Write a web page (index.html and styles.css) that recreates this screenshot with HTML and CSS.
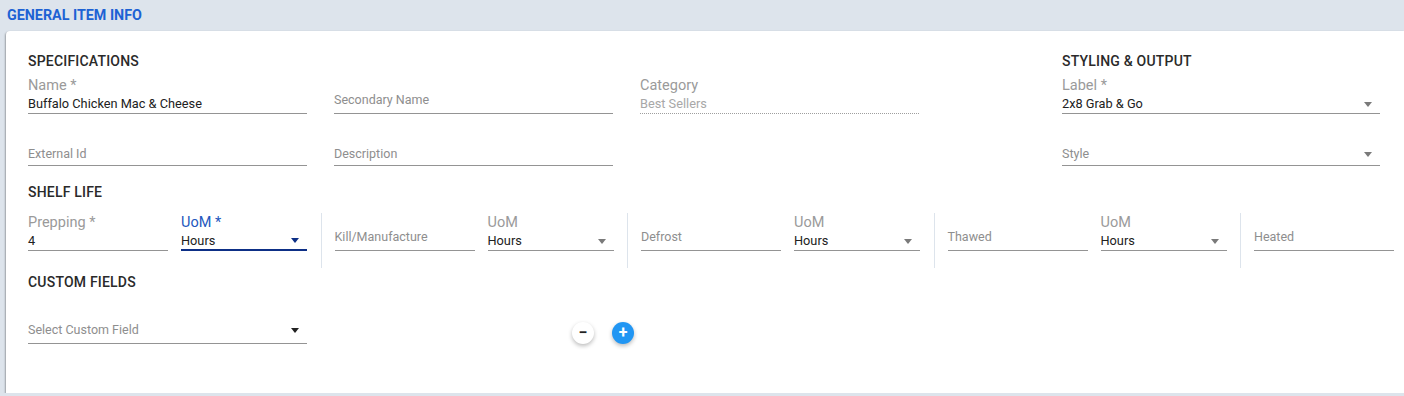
FILE: index.html
```html
<!DOCTYPE html>
<html lang="en">
<head>
    <meta charset="UTF-8">
    <meta name="viewport" content="width=device-width, initial-scale=1.0">
    <title>General Item Info</title>
    <link rel="stylesheet" href="styles.css">
</head>
<body>
    <div class="panel-header">GENERAL ITEM INFO</div>
    <div class="card">
        <div class="top">
            <div class="specs">
                <h3 class="heading">SPECIFICATIONS</h3>
                <div class="grid">
                    <div class="field">
                        <div class="label">Name *</div>
                        <div class="value">Buffalo Chicken Mac &amp; Cheese</div>
                    </div>
                    <div class="field">
                        <div class="placeholder">Secondary Name</div>
                    </div>
                    <div class="field readonly">
                        <div class="label">Category</div>
                        <div class="value">Best Sellers</div>
                    </div>
                    <div class="field low">
                        <div class="placeholder">External Id</div>
                    </div>
                    <div class="field low">
                        <div class="placeholder">Description</div>
                    </div>
                </div>
            </div>
            <div class="styling">
                <h3 class="heading">STYLING &amp; OUTPUT</h3>
                <div class="stack">
                    <div class="field select">
                        <div class="label">Label *</div>
                        <div class="value">2x8 Grab &amp; Go <span class="arrow"></span></div>
                    </div>
                    <div class="field select low">
                        <div class="placeholder">Style <span class="arrow"></span></div>
                    </div>
                </div>
            </div>
        </div>

        <h3 class="heading shelf-title">SHELF LIFE</h3>
        <div class="shelf">
            <div class="group">
                <div class="field short">
                    <div class="label">Prepping *</div>
                    <div class="value">4</div>
                </div>
                <div class="field unit focused select">
                    <div class="label">UoM *</div>
                    <div class="value">Hours <span class="arrow"></span></div>
                </div>
            </div>
            <div class="group">
                <div class="field short">
                    <div class="placeholder">Kill/Manufacture</div>
                </div>
                <div class="field unit select">
                    <div class="label">UoM</div>
                    <div class="value">Hours <span class="arrow"></span></div>
                </div>
            </div>
            <div class="group">
                <div class="field short">
                    <div class="placeholder">Defrost</div>
                </div>
                <div class="field unit select">
                    <div class="label">UoM</div>
                    <div class="value">Hours <span class="arrow"></span></div>
                </div>
            </div>
            <div class="group">
                <div class="field short">
                    <div class="placeholder">Thawed</div>
                </div>
                <div class="field unit select">
                    <div class="label">UoM</div>
                    <div class="value">Hours <span class="arrow"></span></div>
                </div>
            </div>
            <div class="group last">
                <div class="field short">
                    <div class="placeholder">Heated</div>
                </div>
            </div>
        </div>

        <h3 class="heading custom-title">CUSTOM FIELDS</h3>
        <div class="custom">
            <div class="field select dark">
                <div class="placeholder">Select Custom Field <span class="arrow"></span></div>
            </div>
            <div class="fabs">
                <button class="fab minus">&minus;</button>
                <button class="fab plus">+</button>
            </div>
        </div>
    </div>
</body>
</html>
```

FILE: styles.css
```css
body {
    margin: 0;
    background: #dde4ec;
    font-family: Roboto, 'Liberation Sans', Arial, sans-serif;
    color: #212121;
    overflow: hidden;
}
.panel-header {
    height: 31px;
    line-height: 31px;
    padding-left: 7px;
    font-size: 14.3px;
    font-weight: 700;
    color: #1d62d4;
}
.card {
    margin-left: 6px;
    height: 362px;
    background: #fff;
    border-radius: 4px 0 0 0;
    box-shadow: -1px 1px 2px #0003, 0 1px 2px #0005;
    padding: 22px 0 0 22px;
    box-sizing: border-box;
}
.heading {
    margin: 0;
    font-size: 14px;
    line-height: 16px;
    font-weight: 500;
    letter-spacing: 0.2px;
    color: #2a2a2a;
}
.top {
    display: flex;
}
.specs {
    width: 1034px;
}
.grid {
    display: grid;
    grid-template-columns: repeat(3, 279px);
    column-gap: 27px;
    row-gap: 15px;
    margin-top: 8px;
}
.styling {
    width: 318px;
}
.stack {
    display: flex;
    flex-direction: column;
    gap: 15px;
    margin-top: 8px;
}
.field {
    height: 37px;
    display: flex;
    flex-direction: column;
    justify-content: flex-end;
    border-bottom: 1px solid #949494;
    box-sizing: border-box;
}
.label {
    font-size: 14.5px;
    line-height: 18px;
    color: #9a9a9a;
}
.value {
    font-size: 12.75px;
    line-height: 18px;
    display: flex;
    align-items: center;
}
.placeholder {
    font-size: 12.5px;
    line-height: 20px;
    padding-bottom: 3px;
    color: #8e8e8e;
    display: flex;
    align-items: center;
}
.low .placeholder {
    padding-bottom: 1px;
}
.arrow {
    margin-left: auto;
    margin-right: 8px;
    width: 0;
    height: 0;
    border-left: 4.5px solid transparent;
    border-right: 4.5px solid transparent;
    border-top: 5px solid #7a7a7a;
}
.readonly {
    border-bottom: 1px dotted #9e9e9e;
}
.readonly .value {
    color: #a8a8a8;
}
.shelf-title {
    margin-top: 18px;
}
.shelf {
    display: flex;
    margin-top: 13px;
}
.group {
    display: flex;
    gap: 13px;
    width: 279px;
    height: 54px;
    padding: 1px 13.5px 0 13px;
    border-right: 1px solid #dde4ec;
}
.group:first-child {
    padding-left: 0;
}
.group.last {
    border-right: none;
}
.short {
    width: 140px;
}
.unit {
    width: 126px;
}
.focused {
    border-bottom: 2px solid #0d2f86;
}
.focused .label {
    color: #2457bd;
}
.focused .arrow {
    border-top-color: #0d2f86;
}
.focused .value {
    line-height: 17px;
}
.custom-title {
    margin-top: 6px;
}
.custom {
    display: flex;
    align-items: flex-end;
    margin-top: 17px;
}
.custom .field {
    width: 279px;
}
.dark .arrow {
    border-top-color: #222;
}
.fabs {
    display: flex;
    gap: 18px;
    margin-left: 265px;
}
.fab {
    width: 22px;
    height: 22px;
    border-radius: 50%;
    border: none;
    padding: 0;
    font-family: inherit;
    font-size: 16px;
    font-weight: 700;
    line-height: 22px;
    text-align: center;
    box-shadow: 0 2px 4px #0004;
}
.minus {
    background: #fff;
    color: #222;
}
.plus {
    background: #2196f3;
    color: #fff;
}
```
